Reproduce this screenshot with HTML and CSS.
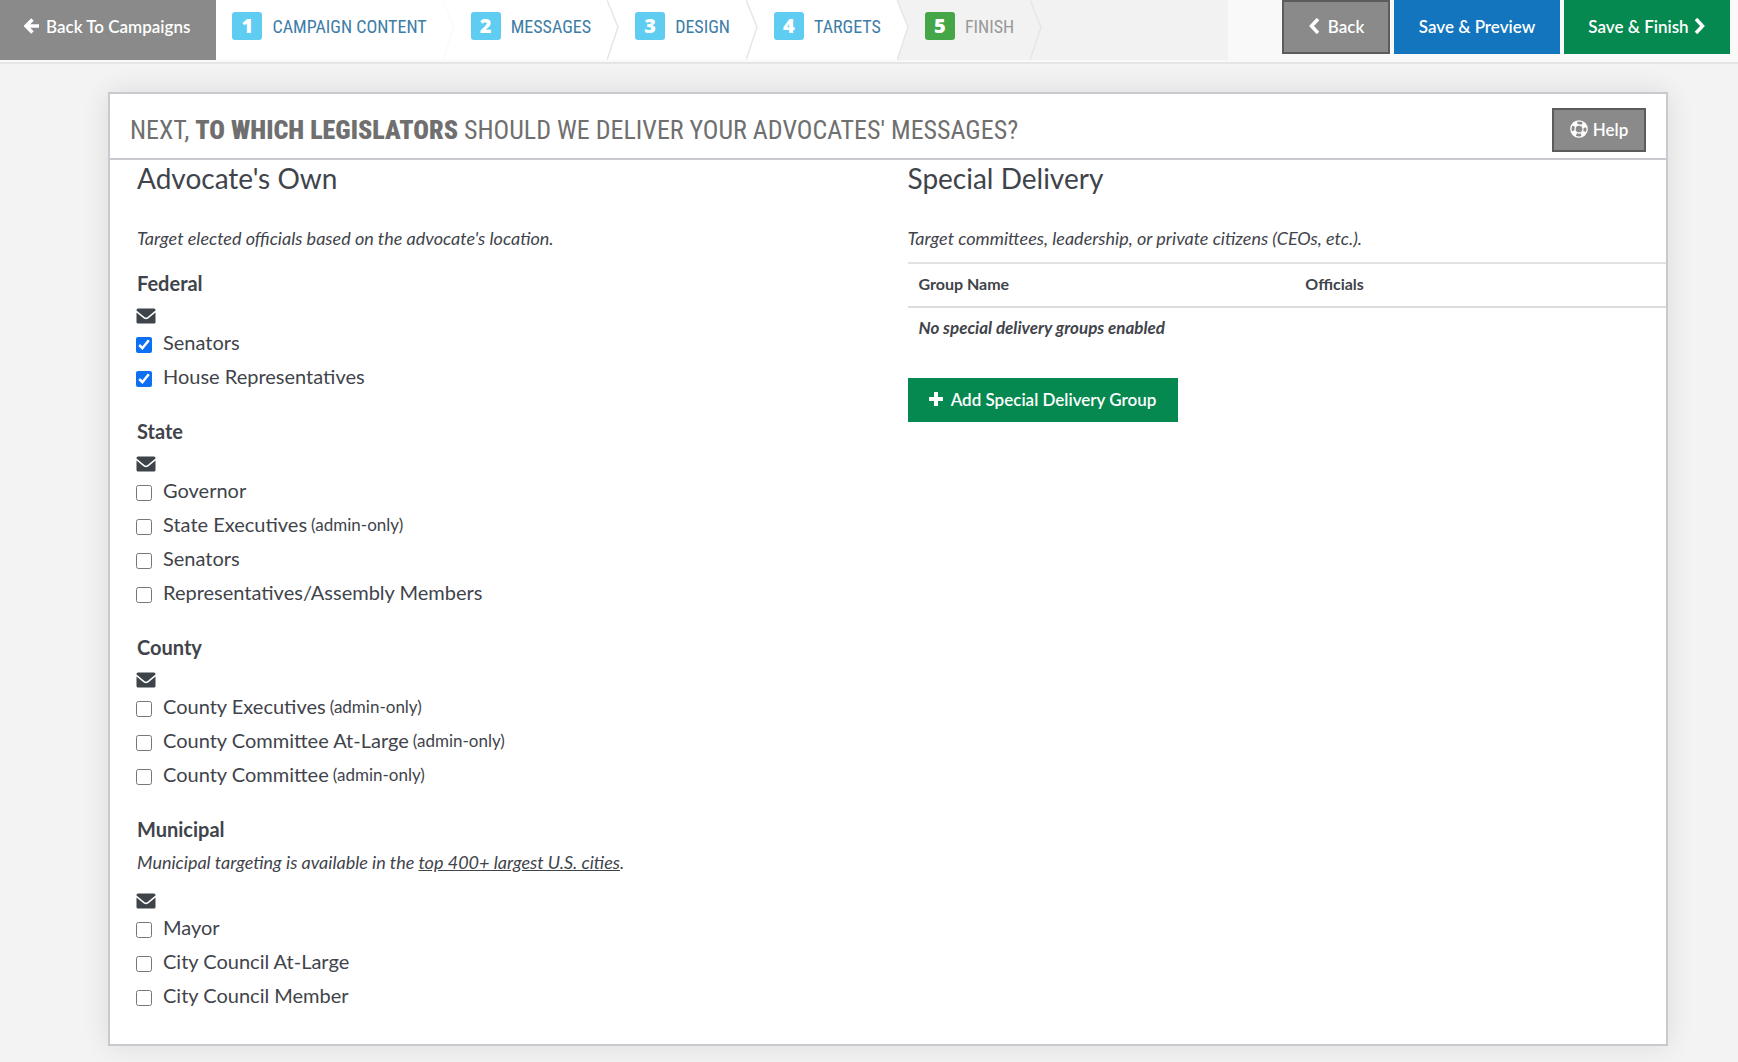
FILE: index.html
```html
<!DOCTYPE html>
<html lang="en">
  <head>
    <meta charset="UTF-8" />
    <meta name="viewport" content="width=device-width, initial-scale=1.0" />
    <title>Campaign Targets</title>
    <link rel="stylesheet" href="styles.css">
  </head>
  <body>
    <svg class="sprite" aria-hidden="true">
      <symbol id="envelope" viewBox="0 0 20 16">
        <path d="M2 0.5h16q1.5 0 1.5 1.5v0.6L11.6 9q-1.6 1.1-3.2 0L0.5 2.6V2Q0.5 0.5 2 0.5z" />
        <path d="M0.5 4.6l7.3 5.8q2.2 1.5 4.4 0l7.3-5.8V14q0 1.5-1.5 1.5H2Q0.5 15.5 0.5 14z" />
      </symbol>
      <symbol id="chevron" viewBox="0 0 12 60">
        <path d="M0 0L11 27L0 60" fill="none" stroke="#e6e6e6" stroke-width="1.5" />
      </symbol>
    </svg>

    <header class="topbar">
      <a class="back-link" href="#">
        <svg class="icon" width="16" height="16" viewBox="0 0 16 16"><path d="M8.5 1.5L2 8l6.500 6.500M2.500 8H15" fill="none" stroke="#fff" stroke-width="3.500" /></svg>
        Back To Campaigns
      </a>
      <ol class="steps">
        <li class="step">
          <a href="#"><span class="step__num">1</span>CAMPAIGN CONTENT</a>
          <svg class="step__arrow step__arrow--faint"><use href="#chevron" /></svg>
        </li>
        <li class="step">
          <a href="#"><span class="step__num">2</span>MESSAGES</a>
          <svg class="step__arrow"><use href="#chevron" /></svg>
        </li>
        <li class="step">
          <a href="#"><span class="step__num">3</span>DESIGN</a>
          <svg class="step__arrow"><use href="#chevron" /></svg>
        </li>
        <li class="step">
          <a href="#"><span class="step__num">4</span>TARGETS</a>
          <svg class="step__arrow" viewBox="0 0 12 60"><path d="M0 0h12v60H0L11 27z" fill="#f2f2f2" /><use href="#chevron" /></svg>
        </li>
        <li class="step step--last">
          <a href="#"><span class="step__num">5</span>FINISH</a>
          <svg class="step__arrow"><use href="#chevron" /></svg>
        </li>
      </ol>
      <div class="actions">
        <button class="btn btn--grey btn--back">
          <svg class="icon" width="12" height="16" viewBox="0 0 12 16"><path d="M10 1L3.500 8l6.500 7" fill="none" stroke="#fff" stroke-width="3.500" /></svg>
          Back
        </button>
        <button class="btn btn--blue">Save &amp; Preview</button>
        <button class="btn btn--green">
          Save &amp; Finish
          <svg class="icon" width="12" height="16" viewBox="0 0 12 16"><path d="M2 1l6.500 7L2 15" fill="none" stroke="#fff" stroke-width="3.500" /></svg>
        </button>
      </div>
    </header>

    <main class="card">
      <div class="card__header">
        <h1>NEXT, <strong>TO WHICH LEGISLATORS</strong> SHOULD WE DELIVER YOUR ADVOCATES' MESSAGES?</h1>
        <button class="btn btn--grey btn--help">
          <svg class="icon" width="18" height="18" viewBox="0 0 18 18" fill="none" stroke="#fff">
            <circle cx="9" cy="9" r="8.200" stroke-width="1.300" />
            <circle cx="9" cy="9" r="4" stroke-width="1.300" />
            <circle cx="9" cy="9" r="6.200" stroke-width="4" stroke-dasharray="4.800 4.940" stroke-dashoffset="-2.500" />
          </svg>
          Help
        </button>
      </div>

      <div class="columns">
        <section>
          <h2>Advocate's Own</h2>
          <p class="note">Target elected officials based on the advocate's location.</p>

          <div class="group">
            <h3>Federal</h3>
            <svg class="envelope"><use href="#envelope" /></svg>
            <label class="option"><input type="checkbox" checked />Senators</label>
            <label class="option"><input type="checkbox" checked />House Representatives</label>
          </div>

          <div class="group">
            <h3>State</h3>
            <svg class="envelope"><use href="#envelope" /></svg>
            <label class="option"><input type="checkbox" />Governor</label>
            <label class="option"><input type="checkbox" />State Executives <small>(admin-only)</small></label>
            <label class="option"><input type="checkbox" />Senators</label>
            <label class="option"><input type="checkbox" />Representatives/Assembly Members</label>
          </div>

          <div class="group">
            <h3>County</h3>
            <svg class="envelope"><use href="#envelope" /></svg>
            <label class="option"><input type="checkbox" />County Executives <small>(admin-only)</small></label>
            <label class="option"><input type="checkbox" />County Committee At-Large <small>(admin-only)</small></label>
            <label class="option"><input type="checkbox" />County Committee <small>(admin-only)</small></label>
          </div>

          <div class="group">
            <h3>Municipal</h3>
            <p class="note note--group">Municipal targeting is available in the <a href="#">top 400+ largest U.S. cities</a>.</p>
            <svg class="envelope"><use href="#envelope" /></svg>
            <label class="option"><input type="checkbox" />Mayor</label>
            <label class="option"><input type="checkbox" />City Council At-Large</label>
            <label class="option"><input type="checkbox" />City Council Member</label>
          </div>
        </section>

        <section>
          <h2>Special Delivery</h2>
          <p class="note">Target committees, leadership, or private citizens (CEOs, etc.).</p>
          <table class="groups">
            <thead>
              <tr>
                <th>Group Name</th>
                <th>Officials</th>
              </tr>
            </thead>
            <tbody>
              <tr>
                <td colspan="2">No special delivery groups enabled</td>
              </tr>
            </tbody>
          </table>
          <button class="btn btn--green btn--add">
            <svg class="icon" width="14" height="14" viewBox="0 0 14 14"><path d="M7 0v14M0 7h14" stroke="#fff" stroke-width="4" /></svg>
            Add Special Delivery Group
          </button>
        </section>
      </div>
    </main>
  </body>
</html>
```

FILE: styles.css
```css
* {
  margin: 0;
  padding: 0;
  box-sizing: border-box;
}

body {
  background: #f3f3f3;
  color: #3f444b;
  font-family: Lato, "Open Sans", sans-serif;
  font-size: 17px;
}

.sprite {
  display: none;
}

.icon {
  flex: none;
}

/* top bar */
.topbar {
  display: flex;
  height: 64px;
  background: #f9f9f9;
  border-bottom: 2px solid #e5e5e5;
  padding-bottom: 2px;
}

.back-link {
  display: flex;
  align-items: center;
  gap: 6px;
  padding: 0 26px 8px 24px;
  background: #8a8a8a;
  color: #fff;
  font-weight: 600;
  text-decoration: none;
  white-space: nowrap;
}

.steps {
  display: flex;
  flex: 1;
  background: #f2f2f2;
  list-style: none;
}

.step {
  display: flex;
  background: #fff;
}

.step a {
  display: flex;
  align-items: center;
  gap: 10px;
  padding: 0 16px 8px;
  color: #3d7da6;
  font-family: "Roboto Condensed", "Liberation Sans Narrow", sans-serif;
  font-size: 18px;
  text-decoration: none;
  white-space: nowrap;
}

.step__num {
  width: 30px;
  height: 28px;
  border-radius: 3px;
  background: #5ecdf1;
  color: #fff;
  font-family: "Open Sans", sans-serif;
  font-size: 20px;
  font-weight: 800;
  line-height: 28px;
  text-align: center;
}

.step__arrow {
  width: 12px;
  height: 60px;
}

.step__arrow--faint {
  opacity: 0.15;
}

.step--last {
  background: #f2f2f2;
}

.step--last a {
  color: #999;
}

.step--last .step__num {
  background: #45a647;
}

.actions {
  display: flex;
  gap: 4px;
  padding: 0 8px 6px 54px;
}

/* buttons */
.btn {
  display: flex;
  align-items: center;
  justify-content: center;
  gap: 5px;
  height: 44px;
  padding-bottom: 2px;
  border: 0;
  color: #fff;
  font-family: inherit;
  font-size: 17px;
  font-weight: 600;
  white-space: nowrap;
  cursor: pointer;
}

.btn--grey {
  background: #8a8a8a;
  border: 2px solid #5c5c5c;
}

.btn--blue {
  background: #1275bd;
}

.btn--green {
  background: #068950;
}

.actions .btn {
  width: 166px;
  height: 54px;
}

.actions .btn--back {
  width: 108px;
  gap: 8px;
}

.btn--help {
  width: 94px;
}

.btn--add {
  width: 270px;
  gap: 8px;
}

/* card */
.card {
  margin: 28px 70px 16px 108px;
  background: #fff;
  border: 2px solid #c8cacf;
  box-shadow: 0 0 26px rgba(0, 0, 0, 0.1);
}

.card__header {
  display: flex;
  align-items: center;
  justify-content: space-between;
  height: 66px;
  padding: 8px 20px 0;
  border-bottom: 2px solid #c8cacf;
}

h1 {
  color: #6f6f6f;
  font-family: "Roboto Condensed", "Liberation Sans Narrow", sans-serif;
  font-size: 26px;
  font-weight: 400;
  white-space: nowrap;
}

h1 strong {
  font-weight: 900;
}

.columns {
  display: grid;
  grid-template-columns: 1fr 1fr;
  gap: 12px;
  padding: 0 0 6px 27px;
}

h2 {
  font-size: 28px;
  font-weight: 400;
  line-height: 36px;
}

.note {
  margin-top: 30px;
  font-size: 18px;
  font-style: italic;
  line-height: 24px;
}

.note a {
  color: inherit;
}

.note--group {
  margin: 9px 0 19px;
}

.group {
  margin: 21px 0 25px;
}

h3 {
  font-size: 20px;
  font-weight: 700;
  line-height: 24px;
}

.envelope {
  display: block;
  width: 20px;
  height: 16px;
  margin: 13px 0 2px -1px;
  fill: #3f444b;
}

.option {
  display: flex;
  align-items: center;
  height: 34px;
  padding-bottom: 2px;
  font-size: 20px;
}

.option input {
  width: 16px;
  height: 16px;
  margin: 6px 11px 0 -1px;
  accent-color: #0d6ff2;
}

.option small {
  margin-left: 4px;
  font-size: 17px;
}

.groups {
  width: 100%;
  margin: 12px 0 26px;
  border-collapse: collapse;
  font-size: 16px;
  line-height: 20px;
  text-align: left;
}

.groups th {
  padding: 10px 11px 12px;
  border-top: 2px solid #e1e2e4;
  border-bottom: 2px solid #dcdcde;
}

.groups th:first-child {
  width: 51%;
}

.groups td {
  padding: 10px 11px 14px;
  font-size: 17px;
  font-style: italic;
  font-weight: 700;
}
```
